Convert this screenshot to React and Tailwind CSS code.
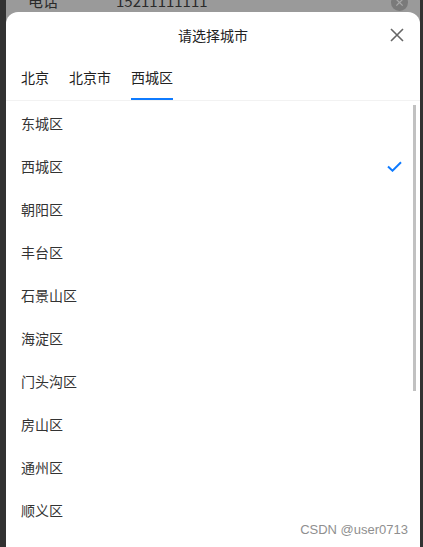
import { useState } from "react";

const districts = [
  "东城区",
  "西城区",
  "朝阳区",
  "丰台区",
  "石景山区",
  "海淀区",
  "门头沟区",
  "房山区",
  "通州区",
  "顺义区",
];

const tabs = ["北京", "北京市", "西城区"];

const font = { fontFamily: '"Noto Sans CJK SC", "Noto Sans", sans-serif' };

const App = () => {
  const [selected, setSelected] = useState("西城区");
  const [activeTab, setActiveTab] = useState(2);

  return (
    <div
      className="relative w-[423px] h-[547px] overflow-hidden bg-[#323232] pl-[6px] pr-[3px] flex"
      style={font}
    >
      <div className="flex-1 flex flex-col bg-[#9a9a9a]">
        {/* form peeking behind the mask */}
        <div className="relative h-[12px] shrink-0 overflow-hidden">
          <div className="absolute left-[22px] top-[-9px] flex items-center text-[15px] leading-[20px] text-[#2a2a2a]">
            <span className="w-[88px]">电话</span>
            <span>15211111111</span>
          </div>
          <div className="absolute right-[12px] top-[-6px] w-[17px] h-[17px] rounded-full bg-[#7a7a7a] flex items-center justify-center">
            <svg width="9" height="9" viewBox="0 0 10 10">
              <path d="M1.5 1.5l7 7M8.5 1.5l-7 7" stroke="#a8a8a8" strokeWidth="1.4" />
            </svg>
          </div>
        </div>

        <div className="flex-1 flex flex-col bg-white rounded-t-[12px] overflow-hidden">
          <div className="h-[46px] shrink-0 flex items-center justify-center relative">
            <span className="text-[14px] text-[#222]">请选择城市</span>
            <button className="absolute right-[16px] top-[16px] w-[14px] h-[14px] flex items-center justify-center">
              <svg width="14" height="14" viewBox="0 0 14 14">
                <path d="M1 1l12 12M13 1L1 13" stroke="#666" strokeWidth="1.6" />
              </svg>
            </button>
          </div>

          <div className="h-[43px] shrink-0 flex gap-5 px-[15px] border-b border-[#f2f2f2]">
            {tabs.map((t, i) => (
              <div
                key={t}
                onClick={() => setActiveTab(i)}
                className={
                  "flex items-center text-[14px] text-[#222] border-b-2 pb-[2px] " +
                  (i === activeTab ? "border-[#0f7bff]" : "border-transparent")
                }
              >
                {t}
              </div>
            ))}
          </div>

          <div className="relative flex-1 overflow-hidden pt-[1px]">
            {districts.map((d) => (
              <div
                key={d}
                onClick={() => setSelected(d)}
                className="h-[43px] flex items-center justify-between pl-[15px] pr-[18px] text-[14px] text-[#333]"
              >
                <span>{d}</span>
                {selected === d && (
                  <svg width="15" height="11" viewBox="0 0 15 11">
                    <path d="M1 5.5l4.5 4.2L14 1.2" fill="none" stroke="#0f7bff" strokeWidth="2" />
                  </svg>
                )}
              </div>
            ))}
            <div className="absolute right-[4px] top-[4px] w-[3px] h-[286px] bg-[#c1c1c1]" />
          </div>
        </div>
      </div>

      <div
        className="absolute right-[15px] bottom-[8px] text-[13px] text-[#8f8f8f]"
        style={{ fontFamily: '"Liberation Sans", Arial, sans-serif' }}
      >
        CSDN @user0713
      </div>
    </div>
  );
};

export default App;
